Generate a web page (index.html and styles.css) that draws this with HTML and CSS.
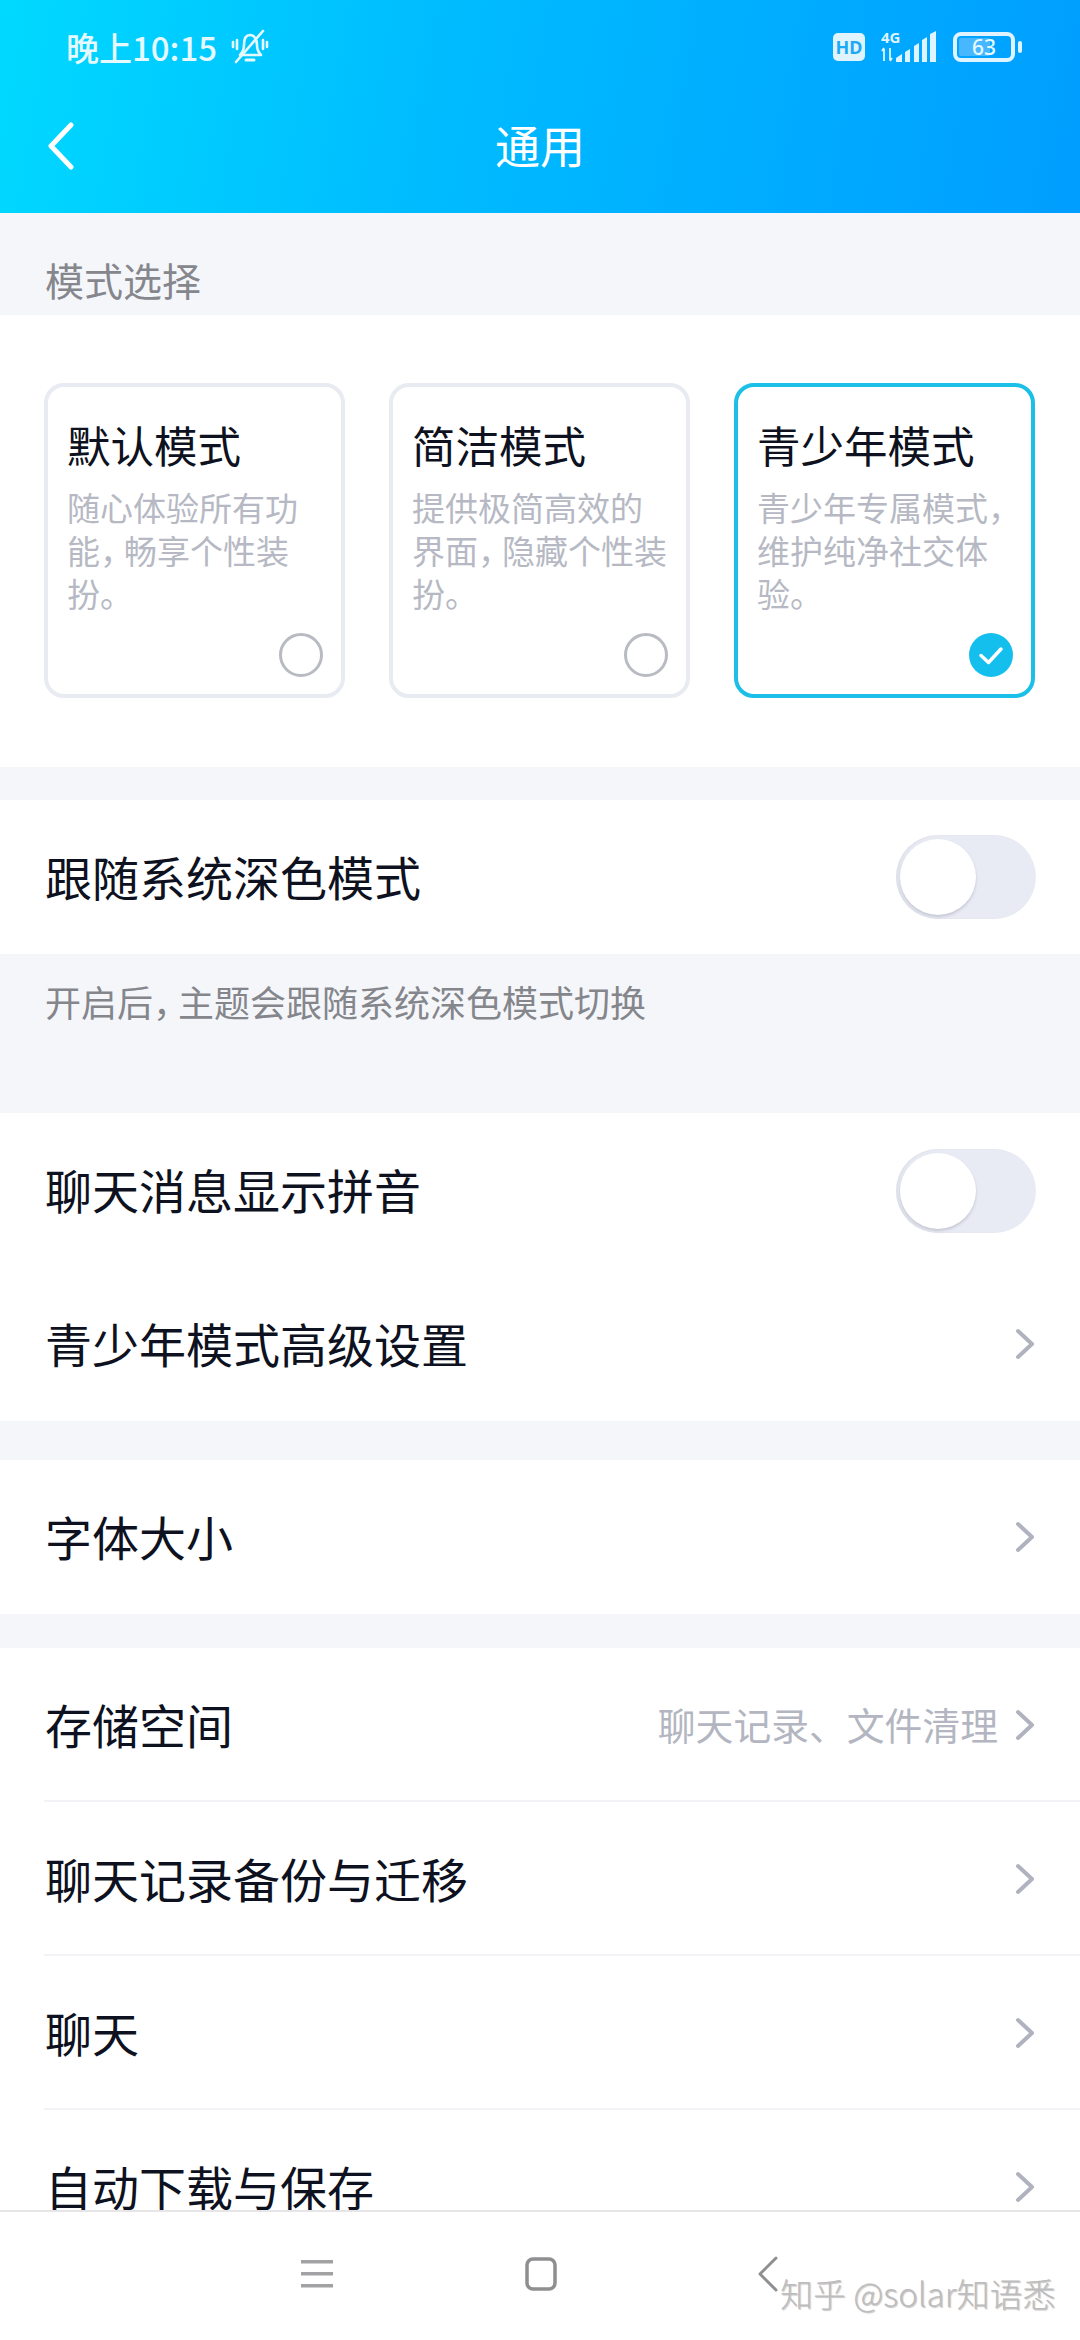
FILE: index.html
```html
<!DOCTYPE html>
<html lang="zh-CN">
<head>
<meta charset="utf-8">
<title>通用</title>
<link rel="stylesheet" href="styles.css">
</head>
<body>
<div class="page">
  <header class="header">
    <div class="status">
      <div class="status-left">
        <span class="time">晚上10:15</span>
        <svg class="bell" width="38" height="36" viewBox="0 0 38 36" fill="none" stroke="#e6f9ff" stroke-width="2.600" stroke-linecap="round" stroke-linejoin="round">
          <path d="M9 26c2-2 4-5 4-10 0-6 2-10 6-10s7 4 7 10c0 5 2 8 4 10z"/>
          <path d="M15 31h8" stroke-width="3"/>
          <path d="M5 33 32 2"/>
          <path d="M6 11v9M2 13v5M32 11v9M36 13v5"/>
        </svg>
      </div>
      <div class="status-right">
        <svg class="hd" width="32" height="28" viewBox="0 0 32 28">
          <rect width="32" height="28" rx="5" fill="#dff4ff"/>
          <text x="16" y="20.500" text-anchor="middle" class="hd-text">HD</text>
        </svg>
        <svg class="signal" width="58" height="32" viewBox="0 0 58 32">
          <text x="2" y="12" class="net-text">4G</text>
          <path d="M5 18v12M3 20l2-3M11 17v12M13 27l-2 3" stroke="#dff4ff" stroke-width="1.800" fill="none"/>
          <path d="M17 31v-4l6-4v8zM26 31V21l5-3v13zM35 31V15l5-3v19zM43 31V9l5-3v25zM51 31V3l6-3v31z" fill="#dff4ff"/>
        </svg>
        <div class="battery">
          <div class="battery-body">
            <span class="battery-level"></span>
            <span class="battery-num">63</span>
          </div>
          <span class="battery-tip"></span>
        </div>
      </div>
    </div>
    <div class="titlebar">
      <svg class="back" width="28" height="48" viewBox="0 0 28 48" fill="none" stroke="#fff" stroke-width="5" stroke-linecap="round" stroke-linejoin="round">
        <path d="M24 3 4 24l20 21"/>
      </svg>
      <h1 class="title">通用</h1>
    </div>
  </header>

  <main class="scroll">
    <div class="section-label">模式选择</div>
    <section class="modes">
      <div class="card">
        <div class="card-title">默认模式</div>
        <div class="card-desc">随心体验所有功<br>能<span class="comma">，</span>畅享个性装<br>扮。</div>
        <span class="radio"></span>
      </div>
      <div class="card">
        <div class="card-title">简洁模式</div>
        <div class="card-desc">提供极简高效的<br>界面<span class="comma">，</span>隐藏个性装<br>扮。</div>
        <span class="radio"></span>
      </div>
      <div class="card card-active">
        <div class="card-title">青少年模式</div>
        <div class="card-desc">青少年专属模式，<br>维护纯净社交体<br>验。</div>
        <svg class="check" width="44" height="44" viewBox="0 0 44 44" fill="none">
          <circle cx="22" cy="22" r="22" fill="#14bfee"/>
          <path d="M12 22.500l7.500 7L32 16" stroke="#fff" stroke-width="3.500" stroke-linecap="round" stroke-linejoin="round"/>
        </svg>
      </div>
    </section>

    <div class="gap gap-33"></div>
    <div class="row row-tall">
      <span class="row-text">跟随系统深色模式</span>
      <span class="toggle"><span class="knob"></span></span>
    </div>
    <div class="note">开启后<span class="comma-note">，</span>主题会跟随系统深色模式切换</div>

    <div class="row row-155">
      <span class="row-text">聊天消息显示拼音</span>
      <span class="toggle"><span class="knob"></span></span>
    </div>
    <div class="row row-153">
      <span class="row-text">青少年模式高级设置</span>
      <svg class="chev" width="20" height="32" viewBox="0 0 20 32" fill="none"><path d="M3 3l14 13L3 29"/></svg>
    </div>

    <div class="gap gap-39"></div>
    <div class="row row-tall">
      <span class="row-text">字体大小</span>
      <svg class="chev" width="20" height="32" viewBox="0 0 20 32" fill="none"><path d="M3 3l14 13L3 29"/></svg>
    </div>

    <div class="gap gap-34"></div>
    <div class="row row-tall row-rule">
      <span class="row-text">存储空间</span>
      <span class="row-hint">聊天记录、文件清理</span>
      <svg class="chev" width="20" height="32" viewBox="0 0 20 32" fill="none"><path d="M3 3l14 13L3 29"/></svg>
    </div>
    <div class="row row-tall row-rule">
      <span class="row-text">聊天记录备份与迁移</span>
      <svg class="chev" width="20" height="32" viewBox="0 0 20 32" fill="none"><path d="M3 3l14 13L3 29"/></svg>
    </div>
    <div class="row row-tall row-rule">
      <span class="row-text">聊天</span>
      <svg class="chev" width="20" height="32" viewBox="0 0 20 32" fill="none"><path d="M3 3l14 13L3 29"/></svg>
    </div>
    <div class="row row-tall">
      <span class="row-text">自动下载与保存</span>
      <svg class="chev" width="20" height="32" viewBox="0 0 20 32" fill="none"><path d="M3 3l14 13L3 29"/></svg>
    </div>
  </main>

  <nav class="navbar">
    <svg width="32" height="28" viewBox="0 0 32 28" fill="#a2a2a4"><rect y="0" width="32" height="3.500"/><rect y="12" width="32" height="3.500"/><rect y="24" width="32" height="3.500"/></svg>
    <svg width="32" height="34" viewBox="0 0 32 34" fill="none" stroke="#8f8f91" stroke-width="3.500"><rect x="2" y="2" width="28" height="30" rx="6"/></svg>
    <svg class="nav-back" width="22" height="36" viewBox="0 0 22 36" fill="none" stroke="#8f8f91" stroke-width="3" stroke-linecap="round" stroke-linejoin="round"><path d="M19 2 3 18l16 16"/></svg>
  </nav>
  <div class="watermark">知乎 @solar知语悉</div>
</div>
</body>
</html>
```
FILE: styles.css
```css
* { box-sizing: border-box; }
html, body { margin: 0; padding: 0; }
body { background: #fff; font-family: "Noto Sans CJK SC", "Noto Sans", sans-serif; color: #0d1120; }
.page { position: relative; width: 1080px; height: 2340px; display: flex; flex-direction: column; overflow: hidden; background: #f5f6fa; }

.header { height: 213px; flex: none; background: linear-gradient(100deg, #00d9ff 0%, #00bcff 40%, #009eff 100%); color: #fff; }
.status { height: 94px; padding: 0 58px 0 66px; display: flex; align-items: center; justify-content: space-between; }
.status-left { display: flex; align-items: center; gap: 14px; }
.time { font-size: 33px; font-weight: 500; color: #e6f9ff; line-height: 40px; }
.status-right { display: flex; align-items: center; }
.hd { margin-right: 14px; }
.hd-text { font-family: "Noto Sans", sans-serif; font-size: 18px; font-weight: 700; fill: #1ea9f5; }
.net-text { font-family: "Noto Sans", sans-serif; font-size: 15px; font-weight: 700; fill: #dff4ff; }
.signal { margin-right: 16px; }
.battery { display: flex; align-items: center; gap: 3px; }
.battery-body { position: relative; width: 62px; height: 30px; border: 4px solid #dff4ff; border-radius: 8px; display: flex; align-items: center; justify-content: center; overflow: hidden; }
.battery-level { position: absolute; left: 2px; top: 2px; bottom: 2px; width: 31px; background: #47b8ff; border-radius: 2px; }
.battery-num { position: relative; font-family: "Noto Sans", sans-serif; font-size: 21px; font-weight: 500; line-height: 22px; color: #e6f9ff; }
.battery-tip { width: 4px; height: 12px; background: #dff4ff; border-radius: 2px; }

.titlebar { position: relative; height: 104px; display: flex; align-items: center; justify-content: center; }
.back { position: absolute; left: 47px; top: 28px; }
.title { margin: 0 0 3px; font-size: 45px; font-weight: 400; line-height: 60px; color: #fff; }

.scroll { flex: 1; min-height: 0; overflow: hidden; }
.section-label { height: 102px; padding: 43px 45px 0; font-size: 39px; line-height: 46px; color: #85878d; }
.modes { background: #fff; padding: 68px 45px 69px 44px; display: flex; gap: 44px; }
.card { width: 301px; height: 315px; border: 4px solid #e9ebf2; border-radius: 20px; padding: 30px 18px 17px 19px; display: flex; flex-direction: column; background: #fff; }
.card-active { border-color: #1bbfe8; }
.card-title { font-size: 43.500px; line-height: 56px; white-space: nowrap; color: #0d1120; }
.card-desc { margin-top: 13px; font-size: 33px; line-height: 43px; color: #b6b9c3; white-space: nowrap; }
.comma { letter-spacing: -9px; }
.comma-note { letter-spacing: -11px; }
.radio { margin-top: auto; align-self: flex-end; width: 44px; height: 44px; border: 3px solid #b9bbc3; border-radius: 50%; }
.check { margin-top: auto; align-self: flex-end; }

.gap { background: #f5f6fa; }
.gap-33 { height: 33px; }
.gap-39 { height: 39px; }
.gap-34 { height: 34px; }

.row { position: relative; background: #fff; padding: 0 44px 0 45px; display: flex; align-items: center; }
.row-tall { height: 154px; flex: none; }
.row-155 { height: 155px; }
.row-153 { height: 153px; }
.row-rule::after { content: ""; position: absolute; left: 44px; right: 0; bottom: 0; height: 2px; background: #f2f3f6; }
.row-text { font-size: 47px; line-height: 60px; color: #0d1120; margin-right: auto; margin-bottom: 3px; }
.row-hint { font-size: 37.800px; line-height: 50px; color: #b3b6c1; margin-right: 17px; margin-bottom: 2px; }
.chev { flex: none; margin-right: 1px; margin-bottom: 1px; }
.chev path { stroke: #b0b3bf; stroke-width: 4; stroke-linecap: round; stroke-linejoin: round; }

.toggle { width: 140px; height: 84px; border-radius: 42px; background: #e8ebf4; padding: 4px; flex: none; display: flex; align-items: center; box-shadow: inset 2px 0 2px #dfe1e8; }
.knob { width: 76px; height: 76px; border-radius: 50%; background: #fff; box-shadow: 0 2px 3px rgba(90, 95, 115, .25); }

.note { height: 159px; padding: 28px 45px 0; font-size: 36px; line-height: 38px; color: #84868c; white-space: nowrap; }

.navbar { height: 130px; flex: none; background: #fff; border-top: 2px solid #e6e6e8; display: flex; align-items: center; gap: 192px; padding: 0 0 4px 301px; }
.nav-back { margin-left: 8px; }
.watermark { position: absolute; left: 780px; top: 2271px; font-size: 33px; font-weight: 300; line-height: 44px; white-space: nowrap; color: #bcbcbe; text-shadow: 1px 1px 1px rgba(110, 110, 110, .4); }
```
